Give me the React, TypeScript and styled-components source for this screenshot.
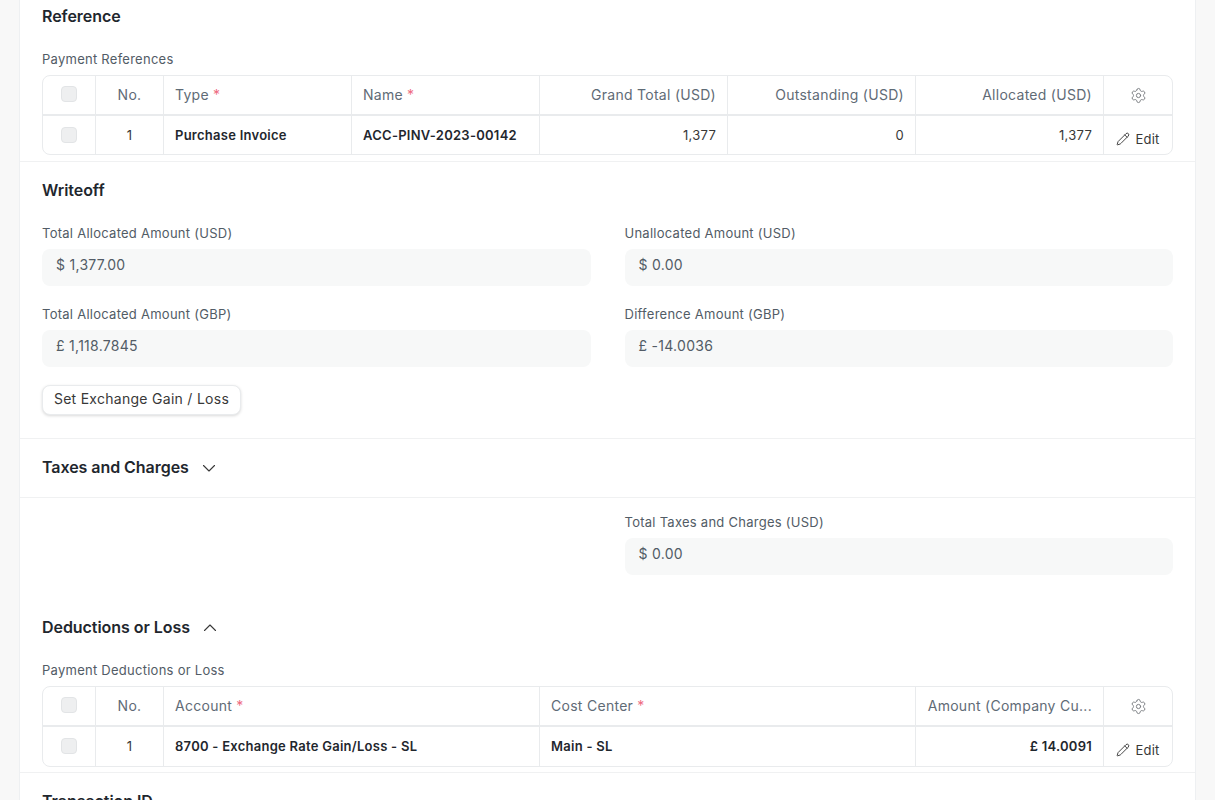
import React from "react";
import styled, {createGlobalStyle} from "styled-components";
import {Settings, Pencil} from "lucide-react";

const GlobalStyle = createGlobalStyle`
  html, body {
    margin: 0;
    padding: 0;
    height: 800px;
    overflow: hidden;
    background: #f8f8f8;
    font-family: Inter, "Noto Sans", sans-serif;
    font-size: 14px;
    color: #383838;
  }
`

const Page = styled.div`
  height: 800px;
  overflow: hidden;
`

const Card = styled.div`
  width: 1175px;
  margin-left: 20px;
  background: #fff;
  box-shadow: 0 0 0 1px #eef0f2;
`

const Section: any = styled.section`
  padding: ${({$pad}: any) => $pad};
  border-bottom: ${({$noLine}: any) => $noLine ? 'none' : '1px solid #f0f1f2'};
`

const Head = styled.div`
  display: flex;
  align-items: center;
  gap: 13px;
  height: 20px;
  font-size: 16px;
  font-weight: 600;
  letter-spacing: -0.05px;
  color: #1f272e;

  svg {
    margin-top: 2px;
  }
`

const HeadGap = styled.div`
  height: 25px;
`

const TableLabel = styled.div`
  font-size: 13px;
  line-height: 16px;
  letter-spacing: 0.02em;
  color: #525c66;
  margin-bottom: 8px;
`

const Table = styled.div`
  border: 1px solid #e9ebed;
  border-radius: 8px;
  overflow: hidden;
`

const Row: any = styled.div`
  display: grid;
  grid-template-columns: ${({$cols}: any) => $cols};
  height: ${({$tall}: any) => $tall ? '39px' : '38px'};
  border-bottom: ${({$header}: any) => $header ? '2px solid #e9ebed' : 'none'};

  > div {
    padding-bottom: ${({$tall, $header}: any) => $header ? '2px' : $tall ? '1px' : '0'};
  }
`

const Cell: any = styled.div`
  display: flex;
  align-items: center;
  justify-content: ${({$align}: any) => $align === 'right' ? 'flex-end' : $align === 'center' ? 'center' : 'flex-start'};
  padding-left: 11px;
  padding-right: 11px;
  border-right: ${({$last}: any) => $last ? 'none' : '1px solid #e9ebed'};
  color: ${({$header, $bold}: any) => $header ? '#5f6b76' : $bold ? '#1f272e' : '#383838'};
  font-weight: ${({$bold}: any) => $bold ? 600 : 400};
  font-size: ${({$header}: any) => $header ? '14px' : '13px'};
  letter-spacing: 0.02em;
  min-width: 0;
  white-space: nowrap;
`

const Req = styled.span`
  color: #ee6a7f;
  margin-left: 4px;
`

const Check = styled.span`
  display: block;
  width: 14px;
  height: 14px;
  border-radius: 4px;
  background: #eeeff0;
  border: 1px solid #e2e4e6;
`

const GearIcon = styled(Settings)`
  display: block;
  width: 17px;
  height: 17px;
  margin-top: 3px;
  color: #7c7f84;
  stroke-width: 1.4;
`

const PencilIcon = styled(Pencil)`
  display: block;
  width: 14px;
  height: 14px;
  color: #383838;
  stroke-width: 1.6;
`

const EditLink = styled.span`
  display: flex;
  align-items: center;
  gap: 5px;
  margin-top: 7px;
  color: #383838;
`

const FormGrid = styled.div`
  display: grid;
  grid-template-columns: 548.5px 548.5px;
  column-gap: 34px;
  row-gap: 20px;
`

const Field = styled.div`
  grid-column: ${({$col}: any) => $col || 'auto'};
` as any

const FieldLabel = styled.div`
  font-size: 13px;
  line-height: 16px;
  letter-spacing: 0.02em;
  color: #525c66;
  margin-bottom: 8px;
`

const ValueBox = styled.div`
  height: 37px;
  line-height: 32px;
  box-sizing: border-box;
  padding-left: 14px;
  border-radius: 8px;
  background: #f7f8f8;
  font-size: 14px;
  letter-spacing: 0.02em;
  color: #525c66;
`

const Button = styled.button`
  display: block;
  margin-top: 18px;
  height: 30px;
  width: 199px;
  padding: 0 0 4px;
  background: #fff;
  border: 1px solid #e9ebed;
  border-radius: 8px;
  box-shadow: 0 1px 3px rgba(0, 0, 0, 0.15);
  font-family: inherit;
  font-size: 14px;
  letter-spacing: 0.02em;
  color: #383838;
`

const Chevron = ({up}: {up?: boolean}) => (
    <svg width="14" height="14" viewBox="0 0 14 14" fill="none" stroke="#383838" strokeWidth="1.1">
        <path d={up ? "M1.5 9.5L7 4l5.5 5.5" : "M1.5 4.5L7 10l5.5-5.5"} strokeLinecap="round" strokeLinejoin="round"/>
    </svg>
)

const REF_COLS = "53px 68px 188px 188px 188px 188px 188px 1fr";
const DED_COLS = "53px 68px 376px 376px 188px 1fr";

const App: React.FC = () => {
    return (
        <Page>
            <GlobalStyle/>
            <Card>
                <Section $pad="6px 22px 6px 22px">
                    <Head>Reference</Head>
                    <HeadGap/>
                    <TableLabel>Payment References</TableLabel>
                    <Table>
                        <Row $cols={REF_COLS} $header>
                            <Cell $header $align="center"><Check/></Cell>
                            <Cell $header $align="center">No.</Cell>
                            <Cell $header>Type<Req>*</Req></Cell>
                            <Cell $header>Name<Req>*</Req></Cell>
                            <Cell $header $align="right">Grand Total (USD)</Cell>
                            <Cell $header $align="right">Outstanding (USD)</Cell>
                            <Cell $header $align="right">Allocated (USD)</Cell>
                            <Cell $header $align="center" $last><GearIcon/></Cell>
                        </Row>
                        <Row $cols={REF_COLS}>
                            <Cell $align="center"><Check/></Cell>
                            <Cell $align="center">1</Cell>
                            <Cell $bold>Purchase Invoice</Cell>
                            <Cell $bold>ACC-PINV-2023-00142</Cell>
                            <Cell $align="right">1,377</Cell>
                            <Cell $align="right">0</Cell>
                            <Cell $align="right">1,377</Cell>
                            <Cell $align="center" $last><EditLink><PencilIcon/>Edit</EditLink></Cell>
                        </Row>
                    </Table>
                </Section>
                <Section $pad="18px 22px 23px 22px">
                    <Head>Writeoff</Head>
                    <HeadGap/>
                    <FormGrid>
                        <Field>
                            <FieldLabel>Total Allocated Amount (USD)</FieldLabel>
                            <ValueBox>$ 1,377.00</ValueBox>
                        </Field>
                        <Field>
                            <FieldLabel>Unallocated Amount (USD)</FieldLabel>
                            <ValueBox>$ 0.00</ValueBox>
                        </Field>
                        <Field>
                            <FieldLabel>Total Allocated Amount (GBP)</FieldLabel>
                            <ValueBox>£ 1,118.7845</ValueBox>
                        </Field>
                        <Field>
                            <FieldLabel>Difference Amount (GBP)</FieldLabel>
                            <ValueBox>£ -14.0036</ValueBox>
                        </Field>
                    </FormGrid>
                    <Button>Set Exchange Gain / Loss</Button>
                </Section>
                <Section $pad="18px 22px 20px 22px">
                    <Head>Taxes and Charges<Chevron/></Head>
                </Section>
                <Section $pad="16px 22px 32px 22px" $noLine>
                    <FormGrid>
                        <Field $col="2">
                            <FieldLabel>Total Taxes and Charges (USD)</FieldLabel>
                            <ValueBox>$ 0.00</ValueBox>
                        </Field>
                    </FormGrid>
                </Section>
                <Section $pad="10px 22px 5px 22px">
                    <Head>Deductions or Loss<Chevron up/></Head>
                    <HeadGap/>
                    <TableLabel>Payment Deductions or Loss</TableLabel>
                    <Table>
                        <Row $cols={DED_COLS} $header>
                            <Cell $header $align="center"><Check/></Cell>
                            <Cell $header $align="center">No.</Cell>
                            <Cell $header>Account<Req>*</Req></Cell>
                            <Cell $header>Cost Center<Req>*</Req></Cell>
                            <Cell $header $align="right">Amount (Company Cu...</Cell>
                            <Cell $header $align="center" $last><GearIcon/></Cell>
                        </Row>
                        <Row $cols={DED_COLS} $tall>
                            <Cell $align="center"><Check/></Cell>
                            <Cell $align="center">1</Cell>
                            <Cell $bold>8700 - Exchange Rate Gain/Loss - SL</Cell>
                            <Cell $bold>Main - SL</Cell>
                            <Cell $bold $align="right">£ 14.0091</Cell>
                            <Cell $align="center" $last><EditLink><PencilIcon/>Edit</EditLink></Cell>
                        </Row>
                    </Table>
                </Section>
                <Section $pad="18px 22px 18px 22px" $noLine>
                    <Head>Transaction ID</Head>
                </Section>
            </Card>
        </Page>
    )
}

export default App;
